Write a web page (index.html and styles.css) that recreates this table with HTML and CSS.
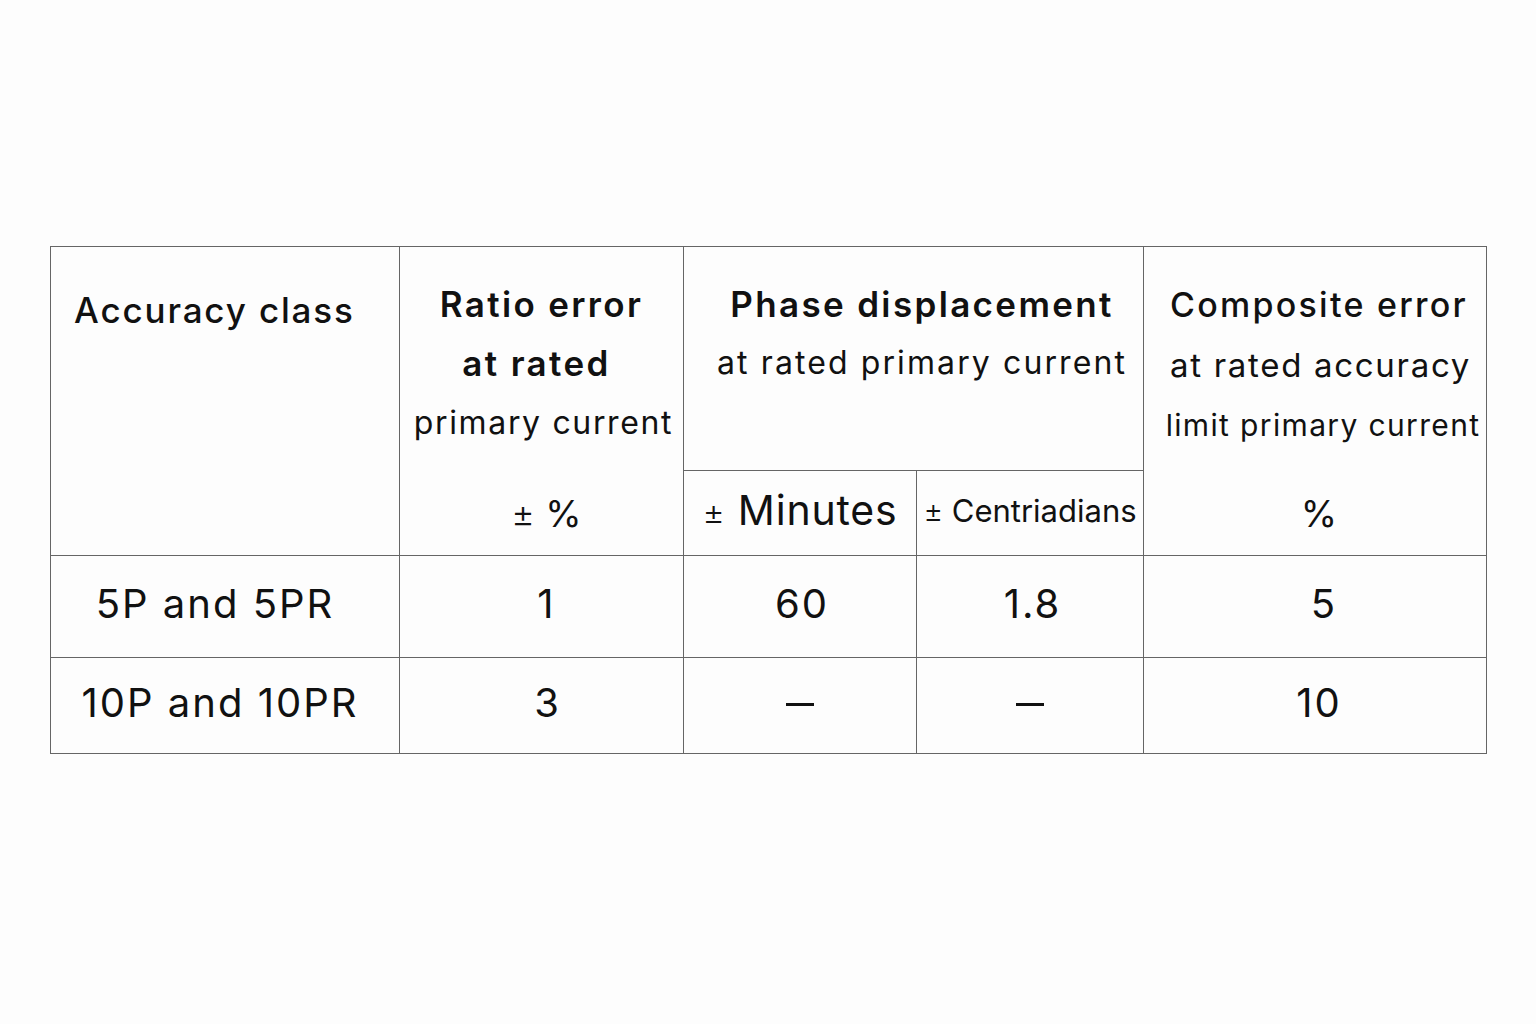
FILE: index.html
```html
<!DOCTYPE html>
<html lang="en">
<head>
<meta charset="utf-8">
<title>Accuracy class table</title>
<link rel="stylesheet" href="styles.css">
</head>
<body>
<main class="page">
  <table class="acc">
    <colgroup>
      <col class="c1"><col class="c2"><col class="c3"><col class="c4"><col class="c5">
    </colgroup>
    <thead>
      <tr class="h-top">
        <th rowspan="2">
          <div class="hc hc-left"><span class="l l-class">Accuracy class</span></div>
        </th>
        <th rowspan="2">
          <div class="hc">
            <span class="l l-bold l-ratio">Ratio error</span>
            <span class="l l-bold l-rated">at rated</span>
            <span class="l l-reg l-prim">primary current</span>
            <span class="unit unit-ratio"><span class="pm">±</span> %</span>
          </div>
        </th>
        <th colspan="2">
          <div class="hp">
            <span class="l l-bold l-phase">Phase displacement</span>
            <span class="l l-reg l-arpc">at rated primary current</span>
          </div>
        </th>
        <th rowspan="2">
          <div class="hc hc-comp">
            <span class="l l-med">Composite error</span>
            <span class="l l-reg2">at rated accuracy</span>
            <span class="l l-small">limit primary current</span>
            <span class="unit">%</span>
          </div>
        </th>
      </tr>
      <tr class="h-sub">
        <th class="sub sub-min"><span class="pm">±</span> Minutes</th>
        <th class="sub sub-cr"><span class="pm">±</span> Centriadians</th>
      </tr>
    </thead>
    <tbody>
      <tr class="r1">
        <td class="name">5P and 5PR</td>
        <td><span class="n n-1">1</span></td>
        <td><span class="n n-60">60</span></td>
        <td><span class="n n-18">1.8</span></td>
        <td><span class="n n-5">5</span></td>
      </tr>
      <tr class="r2">
        <td class="name">10P and 10PR</td>
        <td><span class="n n-3">3</span></td>
        <td><span class="dash"></span></td>
        <td><span class="dash"></span></td>
        <td><span class="n n-10">10</span></td>
      </tr>
    </tbody>
  </table>
</main>
</body>
</html>
```

FILE: styles.css
```css
html, body {
  margin: 0;
  padding: 0;
  background: #fdfdfd;
}

body {
  font-family: Inter, "Open Sans", "Liberation Sans", sans-serif;
  color: #111;
}

.page {
  padding: 246px 0 0 50px;
}

.acc {
  border-collapse: collapse;
  table-layout: fixed;
  width: 1437px;
}

.acc th, .acc td {
  border: 1px solid #666;
  padding: 0;
  text-align: center;
  vertical-align: top;
  font-weight: normal;
}

.c1 { width: 349px; }
.c2 { width: 284px; }
.c3 { width: 233px; }
.c4 { width: 227px; }
.c5 { width: 343px; }

.h-top { height: 224px; }
.h-sub { height: 85px; }

.hc {
  height: 307px;
  display: flex;
  flex-direction: column;
  align-items: center;
  padding-top: 28px;
  box-sizing: border-box;
}

.hc-left {
  align-items: flex-start;
  padding-left: 23px;
  padding-top: 33px;
}

.hc-comp {
  padding-left: 8px;
}

.hp {
  display: flex;
  flex-direction: column;
  align-items: center;
  padding: 28px 0 0 17px;
}

.l {
  display: block;
  line-height: 60px;
  white-space: nowrap;
}

.l-class {
  font-size: 35px;
  font-weight: 500;
  letter-spacing: 1.85px;
}

.l-bold {
  font-size: 35px;
  font-weight: 600;
  letter-spacing: 2.35px;
  line-height: 59px;
}

.l-rated {
  margin-right: 10px;
}

.l-phase {
  line-height: 58px;
}

.l-med {
  font-size: 34px;
  font-weight: 500;
  letter-spacing: 2.25px;
}

.l-reg {
  font-size: 32px;
}

.l-prim {
  margin-left: 4px;
  letter-spacing: 1.65px;
}

.l-arpc {
  letter-spacing: 2.1px;
}

.l-reg2 {
  font-size: 33px;
  letter-spacing: 1.7px;
  margin-left: 3px;
}

.l-small {
  font-size: 30px;
  letter-spacing: 1.35px;
  margin-left: 8px;
}

.unit {
  margin-top: auto;
  margin-bottom: 20px;
  font-size: 37px;
  line-height: 40px;
}

.unit-ratio {
  margin-left: 10px;
}

.pm {
  font-size: 36px;
  font-weight: 300;
}

.acc .sub {
  vertical-align: middle;
  white-space: nowrap;
  padding-bottom: 6px;
}

.sub-min {
  font-size: 41px;
  letter-spacing: 0.02em;
  padding-left: 8px;
}

.sub-min .pm {
  font-size: 34px;
}

.sub-cr {
  font-size: 31px;
  padding-left: 6px;
}

.sub-cr .pm {
  font-size: 30px;
}

.r1 { height: 102px; }
.r2 { height: 96px; }

.acc td {
  vertical-align: middle;
  font-size: 40px;
  padding-bottom: 6px;
  letter-spacing: 2px;
}

.acc .name {
  padding-right: 20px;
}

.acc .r2 .name {
  padding-right: 10px;
}

.n-1 { margin-left: 10px; }
.n-3 { margin-left: 12px; }
.n-60 { margin-left: 4px; }
.n-18 { margin-left: 5px; }
.n-5 { margin-left: 18px; }
.n-10 { margin-left: 8px; }

.dash {
  display: inline-block;
  width: 28px;
  height: 3px;
  background: #111;
  vertical-align: middle;
  margin-top: -4px;
}
```
